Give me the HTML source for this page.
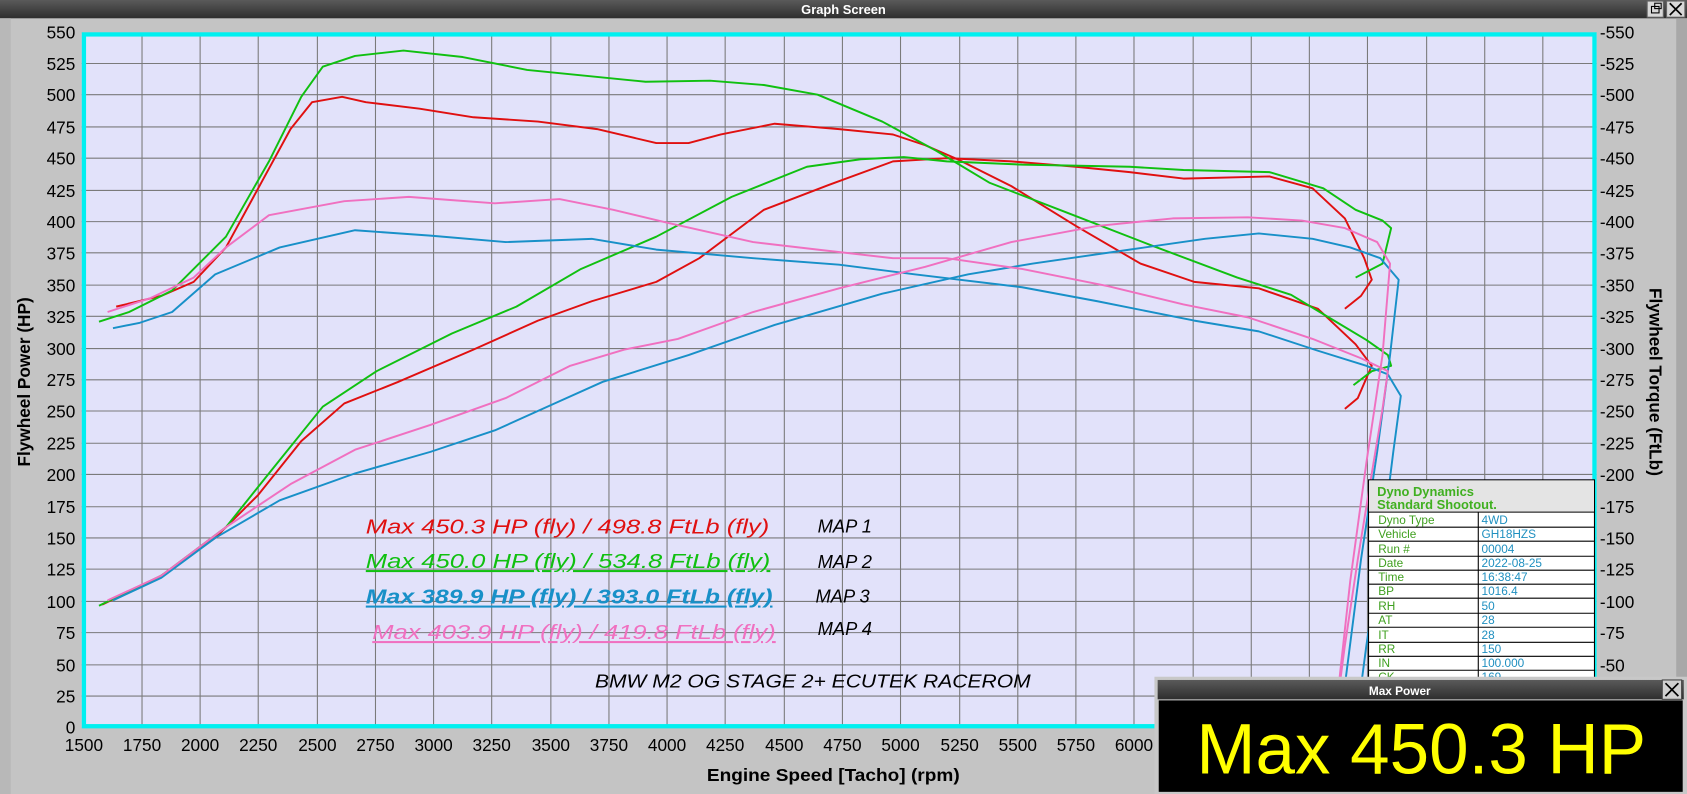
<!DOCTYPE html>
<html><head><meta charset="utf-8"><style>
html,body{margin:0;padding:0;width:1687px;height:794px;overflow:hidden;background:#c0c0c0}
svg{display:block}
text{font-family:"Liberation Sans",sans-serif}
</style></head><body>
<svg width="1687" height="794" viewBox="0 0 1568 738" preserveAspectRatio="none">
<defs><linearGradient id="tb" x1="0" y1="0" x2="0" y2="1"><stop offset="0" stop-color="#5a5a5a"/><stop offset="1" stop-color="#2e2e2e"/></linearGradient></defs>
<rect width="1568" height="738" fill="#c4c4c4"/>
<rect x="0" y="0" width="1568" height="17" fill="url(#tb)"/>
<text x="784" y="13" font-size="12" font-weight="bold" fill="#fff" text-anchor="middle">Graph Screen</text>
<rect x="1531" y="1" width="15" height="15" fill="#d8d8d8" stroke="#666"/>
<rect x="1535" y="6" width="7" height="6" fill="none" stroke="#000"/><rect x="1538" y="3" width="6" height="5" fill="none" stroke="#000"/>
<rect x="1549" y="1" width="17" height="15" fill="#d8d8d8" stroke="#666"/>
<path d="M1552 3 L1563 14 M1563 3 L1552 14" stroke="#000" stroke-width="1.6"/>
<rect x="1558" y="17" width="10" height="721" fill="#a8a8a8"/>
<rect x="0" y="17" width="10" height="721" fill="#b8b8b8"/>
<rect x="76" y="31" width="1408" height="645" fill="#e2e2fa"/>
<g stroke="#7a7a7a" stroke-width="1">
<path d="M132 31V676M186 31V676M240 31V676M295 31V676M349 31V676M403 31V676M457 31V676M512 31V676M566 31V676M620 31V676M674 31V676M729 31V676M783 31V676M837 31V676M892 31V676M946 31V676M1000 31V676M1054 31V676M1109 31V676M1163 31V676M1217 31V676M1271 31V676M1326 31V676M1380 31V676M1434 31V676"/>
<path d="M76 59H1484M76 88H1484M76 118H1484M76 147H1484M76 177H1484M76 206H1484M76 235H1484M76 265H1484M76 294H1484M76 324H1484M76 353H1484M76 382H1484M76 412H1484M76 441H1484M76 471H1484M76 500H1484M76 529H1484M76 559H1484M76 588H1484M76 618H1484M76 647H1484"/>
</g>
<rect x="78" y="32" width="1404" height="643" fill="none" stroke="#00f0f0" stroke-width="4"/>
<g font-size="16" fill="#000" text-anchor="end">
<text x="70" y="36">550</text><text x="70" y="65">525</text><text x="70" y="94">500</text><text x="70" y="124">475</text><text x="70" y="153">450</text><text x="70" y="183">425</text><text x="70" y="212">400</text><text x="70" y="241">375</text><text x="70" y="271">350</text><text x="70" y="300">325</text><text x="70" y="330">300</text><text x="70" y="359">275</text><text x="70" y="388">250</text><text x="70" y="418">225</text><text x="70" y="447">200</text><text x="70" y="477">175</text><text x="70" y="506">150</text><text x="70" y="535">125</text><text x="70" y="565">100</text><text x="70" y="594">75</text><text x="70" y="624">50</text><text x="70" y="653">25</text><text x="70" y="682">0</text>
</g>
<g font-size="16" fill="#000">
<text x="1487" y="36">-550</text><text x="1487" y="65">-525</text><text x="1487" y="94">-500</text><text x="1487" y="124">-475</text><text x="1487" y="153">-450</text><text x="1487" y="183">-425</text><text x="1487" y="212">-400</text><text x="1487" y="241">-375</text><text x="1487" y="271">-350</text><text x="1487" y="300">-325</text><text x="1487" y="330">-300</text><text x="1487" y="359">-275</text><text x="1487" y="388">-250</text><text x="1487" y="418">-225</text><text x="1487" y="447">-200</text><text x="1487" y="477">-175</text><text x="1487" y="506">-150</text><text x="1487" y="535">-125</text><text x="1487" y="565">-100</text><text x="1487" y="594">-75</text><text x="1487" y="624">-50</text>
</g>
<g font-size="16" fill="#000" text-anchor="middle">
<text x="78" y="698">1500</text><text x="132" y="698">1750</text><text x="186" y="698">2000</text><text x="240" y="698">2250</text><text x="295" y="698">2500</text><text x="349" y="698">2750</text><text x="403" y="698">3000</text><text x="457" y="698">3250</text><text x="512" y="698">3500</text><text x="566" y="698">3750</text><text x="620" y="698">4000</text><text x="674" y="698">4250</text><text x="729" y="698">4500</text><text x="783" y="698">4750</text><text x="837" y="698">5000</text><text x="892" y="698">5250</text><text x="946" y="698">5500</text><text x="1000" y="698">5750</text><text x="1054" y="698">6000</text>
</g>
<text x="657" y="726" font-size="16" font-weight="bold" textLength="235" lengthAdjust="spacingAndGlyphs">Engine Speed [Tacho] (rpm)</text>
<text transform="translate(28,355) rotate(-90)" font-size="16" font-weight="bold" text-anchor="middle">Flywheel Power (HP)</text>
<text transform="translate(1533,355) rotate(90)" font-size="16" font-weight="bold" text-anchor="middle">Flywheel Torque (FtLb)</text>
<g fill="none" stroke-width="1.8" stroke-linejoin="round">
<polyline stroke="#e01010" points="108,285 150,275 180,262 210,230 240,175 270,120 290,95 318,90 340,95 390,101 440,109 500,113 555,120 610,133 640,133 670,125 720,115 780,120 830,125 860,135 890,148 940,173 1000,210 1060,245 1110,262 1170,268 1225,287 1260,320 1275,340 1262,370 1250,380"/>
<polyline stroke="#e01010" points="95,562 150,535 200,500 240,460 280,410 320,375 370,355 440,325 500,298 550,280 610,262 650,240 710,195 770,172 830,150 880,147 940,150 1000,155 1050,160 1100,166 1180,164 1220,175 1250,203 1268,240 1275,260 1265,275 1250,287"/>
<polyline stroke="#10c010" points="92,299 120,290 160,270 210,220 250,150 280,90 300,62 330,52 375,47 430,53 490,65 540,70 600,76 660,75 710,79 760,88 820,113 870,140 920,170 990,197 1070,228 1150,258 1200,274 1240,298 1270,316 1290,330 1293,340 1275,345 1258,358"/>
<polyline stroke="#10c010" points="92,563 150,535 210,490 250,440 300,378 350,345 420,310 480,285 540,250 610,220 680,183 750,155 800,148 840,146 880,150 950,153 1050,155 1100,158 1180,160 1230,175 1260,195 1285,205 1293,212 1285,245 1260,258"/>
<polyline stroke="#1890c8" points="105,305 130,300 160,290 200,255 260,230 330,214 400,219 470,225 550,222 610,232 700,240 780,246 850,255 950,267 1020,280 1110,298 1170,308 1225,326 1270,340 1290,348 1302,368 1295,420 1285,500 1270,600 1260,676"/>
<polyline stroke="#1890c8" points="105,558 150,537 200,500 260,465 330,440 400,420 460,400 520,373 560,355 640,330 720,302 820,273 900,255 960,245 1050,232 1120,222 1170,217 1220,222 1255,230 1283,240 1300,260 1292,330 1280,420 1265,520 1245,676"/>
<polyline stroke="#f070c0" points="100,290 140,277 180,258 210,230 250,200 320,187 380,183 420,186 460,189 520,185 570,195 620,207 700,225 760,232 830,240 880,240 950,250 1030,266 1100,283 1160,295 1220,315 1265,333 1290,345 1285,380 1275,440 1262,520 1250,600 1240,676"/>
<polyline stroke="#f070c0" points="100,558 150,535 210,490 270,450 330,418 400,395 470,370 530,340 580,325 630,315 700,290 780,268 860,248 940,225 1020,210 1090,203 1160,202 1210,205 1250,212 1280,225 1292,245 1285,330 1270,430 1255,540 1240,676"/>
</g>
<g font-size="19" font-style="italic" lengthAdjust="spacingAndGlyphs">
<text x="340" y="496" fill="#e01010" textLength="375" lengthAdjust="spacingAndGlyphs">Max 450.3 HP (fly) / 498.8 FtLb (fly)</text>
<text x="340" y="528" fill="#10c010" text-decoration="underline" textLength="376" lengthAdjust="spacingAndGlyphs">Max 450.0 HP (fly) / 534.8 FtLb (fly)</text>
<text x="340" y="561" fill="#1890c8" font-weight="bold" text-decoration="underline" textLength="378" lengthAdjust="spacingAndGlyphs">Max 389.9 HP (fly) / 393.0 FtLb (fly)</text>
<text x="346" y="594" fill="#f070c0" text-decoration="underline" textLength="375" lengthAdjust="spacingAndGlyphs">Max 403.9 HP (fly) / 419.8 FtLb (fly)</text>
</g>
<g font-size="17" font-style="italic" fill="#000">
<text x="760" y="495">MAP 1</text><text x="760" y="528">MAP 2</text><text x="758" y="560">MAP 3</text><text x="760" y="590">MAP 4</text>
<text x="553" y="639" textLength="405" lengthAdjust="spacingAndGlyphs">BMW M2 OG STAGE 2+ ECUTEK RACEROM</text>
</g>
<g>
<rect x="1272" y="446" width="210" height="190" fill="#fff" stroke="#000"/>
<rect x="1273" y="447" width="208" height="29" fill="#e4e4e4"/>
<text x="1280" y="461" font-size="12" font-weight="bold" fill="#40b020">Dyno Dynamics</text>
<text x="1280" y="473" font-size="12" font-weight="bold" fill="#40b020">Standard Shootout.</text>
<g stroke="#000" stroke-width="1"><path d="M1272 476H1482M1272 490H1482M1272 503H1482M1272 517H1482M1272 530H1482M1272 543H1482M1272 556H1482M1272 570H1482M1272 583H1482M1272 597H1482M1272 610H1482M1272 623H1482M1374 476V636"/></g>
<g font-size="11" fill="#40a020">
<text x="1281" y="487">Dyno Type</text><text x="1281" y="500">Vehicle</text><text x="1281" y="514">Run #</text><text x="1281" y="527">Date</text><text x="1281" y="540">Time</text><text x="1281" y="553">BP</text><text x="1281" y="567">RH</text><text x="1281" y="580">AT</text><text x="1281" y="594">IT</text><text x="1281" y="607">RR</text><text x="1281" y="620">IN</text><text x="1281" y="633">CK</text>
</g>
<g font-size="11" fill="#2090c0">
<text x="1377" y="487">4WD</text><text x="1377" y="500">GH18HZS</text><text x="1377" y="514">00004</text><text x="1377" y="527">2022-08-25</text><text x="1377" y="540">16:38:47</text><text x="1377" y="553">1016.4</text><text x="1377" y="567">50</text><text x="1377" y="580">28</text><text x="1377" y="594">28</text><text x="1377" y="607">150</text><text x="1377" y="620">100.000</text><text x="1377" y="633">169</text>
</g>
</g>
<rect x="1073" y="629" width="495" height="109" fill="#c8c8c8"/>
<rect x="1076" y="632" width="489" height="18" fill="url(#tb)"/>
<text x="1301" y="646" font-size="11" font-weight="bold" fill="#fff" text-anchor="middle">Max Power</text>
<rect x="1545" y="632" width="18" height="18" fill="#d0d0d0" stroke="#444"/>
<path d="M1548 635 L1560 647 M1560 635 L1548 647" stroke="#000" stroke-width="1.6"/>
<rect x="1077" y="651" width="487" height="85" fill="#000"/>
<text x="1112" y="719" font-size="66" fill="#ffff00" textLength="418" lengthAdjust="spacingAndGlyphs">Max 450.3 HP</text>
</svg>
</body></html>
